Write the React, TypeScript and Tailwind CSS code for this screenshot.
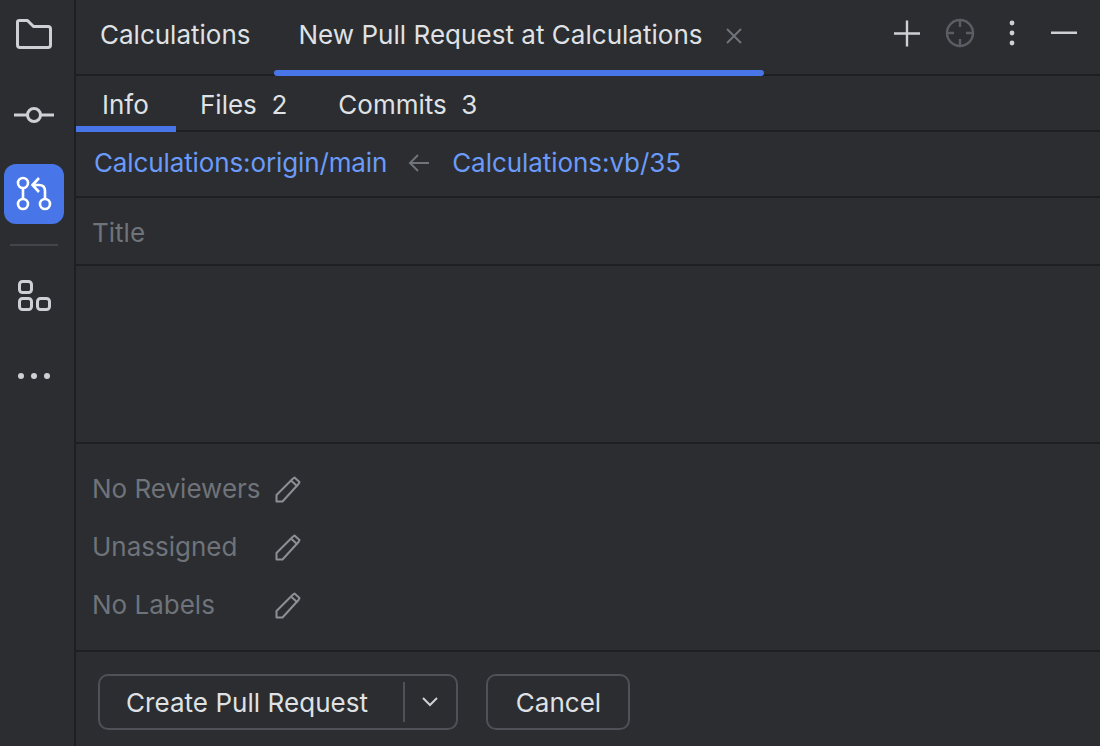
import React from "react";

const Pencil = () => (
  <svg width="28" height="28" viewBox="0 0 28 28" fill="none" stroke="#8c8f96" strokeWidth="2" className="shrink-0">
    <path d="M2.5 26.5V20L18.5 4L20.5 2.5L25.5 7L24.5 9L8.5 26.5Z" strokeLinejoin="round" />
    <path d="M17 5.5L23.5 11.5" />
  </svg>
);

function MetaRow({ label }: { label: string }) {
  return (
    <div className="flex items-center h-[58px]">
      <span className="w-[182px] text-[#6f737a]">{label}</span>
      <Pencil />
    </div>
  );
}

export default function App() {
  return (
    <div
      className="w-[1100px] h-[746px] flex bg-[#2b2d30] text-[26px] leading-[32px] text-[#dfe1e5] overflow-hidden"
      style={{ fontFamily: "Inter, sans-serif" }}
    >
      <aside className="w-[76px] shrink-0 border-r-2 border-[#1e1f22] flex flex-col items-center pt-[14px] pr-[6px]">
        <svg width="40" height="40" viewBox="0 0 40 40" fill="none" stroke="#ced0d6" strokeWidth="3" strokeLinejoin="round">
          <path d="M3.5 8Q3.5 6.5 5.5 6.5H13.5L19.5 12.5H34Q36.5 12.5 36.5 15V31Q36.5 33.5 34 33.5H6Q3.5 33.5 3.5 31Z" />
        </svg>
        <svg width="40" height="40" viewBox="0 0 40 40" fill="none" stroke="#ced0d6" strokeWidth="3" className="mt-[41px]">
          <circle cx="20" cy="20" r="6.5" />
          <path d="M0 20H13M27 20H40" />
        </svg>
        <div className="mt-[29px] w-[60px] h-[60px] rounded-[12px] bg-[#4876e8] flex items-center justify-center">
          <svg width="40" height="40" viewBox="0 0 40 40" fill="none" stroke="#ffffff" strokeWidth="2.6">
            <circle cx="9" cy="9" r="5" />
            <circle cx="9" cy="30" r="5" />
            <circle cx="31" cy="30" r="5" />
            <path d="M9 14V25" />
            <path d="M31 25V17Q31 11 25 11H19M25 4L18.5 11L25 18" />
          </svg>
        </div>
        <div className="mt-[20px] w-[48px] h-[2px] bg-[#43454a]" />
        <svg width="40" height="40" viewBox="0 0 40 40" fill="none" stroke="#ced0d6" strokeWidth="3" className="mt-[30px]">
          <rect x="5.5" y="5.5" width="12" height="11" rx="3" />
          <rect x="5.5" y="22.5" width="12" height="11" rx="3" />
          <rect x="23.5" y="22.5" width="12" height="11" rx="3" />
        </svg>
        <svg width="40" height="12" viewBox="0 0 40 12" fill="#ced0d6" className="mt-[54px]">
          <circle cx="7" cy="6" r="3" />
          <circle cx="20" cy="6" r="3" />
          <circle cx="33" cy="6" r="3" />
        </svg>
      </aside>

      <main className="flex-1 min-w-0 flex flex-col">
        <header className="h-[76px] shrink-0 border-b-2 border-[#1e1f22] flex items-start relative">
          <div className="pl-[24px] pt-[19px]">Calculations</div>
          <div className="ml-[23px] w-[490px] h-[76px] relative pl-[25px] pt-[19px] flex items-start">
            <span className="tracking-[0.03px]">New Pull Request at Calculations</span>
            <svg width="18" height="18" viewBox="0 0 18 18" stroke="#6f737a" strokeWidth="2" className="ml-[22px] mt-[8px]">
              <path d="M2 2L16 16M16 2L2 16" />
            </svg>
            <div className="absolute left-0 right-0 top-[70px] h-[6px] rounded-full bg-[#4876e8]" />
          </div>
          <div className="ml-auto flex items-center pt-[18px]">
            <svg width="28" height="28" viewBox="0 0 28 28" stroke="#ced0d6" strokeWidth="2.4" className="mr-[24px]">
              <path d="M1 14.5H27M14 1.5V27.5" />
            </svg>
            <svg width="30" height="30" viewBox="0 0 30 30" fill="none" stroke="#5a5d63" strokeWidth="2.4" className="mr-[33px]">
              <circle cx="15" cy="15" r="13" />
              <path d="M15 2V9M15 21V28M2 15H9M21 15H28" />
            </svg>
            <svg width="8" height="26" viewBox="0 0 8 26" fill="#ced0d6" className="mr-[35px]">
              <circle cx="4" cy="3" r="2.4" />
              <circle cx="4" cy="13" r="2.4" />
              <circle cx="4" cy="23" r="2.4" />
            </svg>
            <svg width="26" height="4" viewBox="0 0 26 4" fill="#ced0d6" className="mr-[23px]">
              <rect width="26" height="2.5" y="0.5" />
            </svg>
          </div>
        </header>

        <nav className="h-[56px] shrink-0 border-b-2 border-[#1e1f22] flex items-start relative">
          <div className="w-[100px] h-[56px] relative pl-[26px] pt-[13px]">
            Info
            <div className="absolute left-0 right-0 top-[50px] h-[6px] bg-[#4876e8]" />
          </div>
          <div className="ml-[24px] pt-[13px] whitespace-pre">Files  2</div>
          <div className="ml-[51px] pt-[13px] whitespace-pre">Commits  3</div>
        </nav>

        <section className="h-[66px] shrink-0 border-b-2 border-[#1e1f22] flex items-center pl-[18px] pb-[2px] text-[#6b9bfa]">
          <span className="tracking-[-0.12px]">Calculations:origin/main</span>
          <svg width="22" height="20" viewBox="0 0 22 20" fill="none" stroke="#6f737a" strokeWidth="2" className="ml-[21px]">
            <path d="M21 10H2M10 2L2 10L10 18" />
          </svg>
          <span className="ml-[22px] tracking-[-0.06px]">Calculations:vb/35</span>
        </section>

        <section className="h-[68px] shrink-0 border-b-2 border-[#1e1f22] flex items-center pl-[16px] pt-[4px] text-[#6f737a]">
          Title
        </section>

        <section className="h-[178px] shrink-0 border-b-2 border-[#1e1f22]" />

        <section className="h-[208px] shrink-0 border-b-2 border-[#1e1f22] pl-[16px] pt-[16px] flex flex-col">
          <MetaRow label="No Reviewers" />
          <MetaRow label="Unassigned" />
          <MetaRow label="No Labels" />
        </section>

        <footer className="flex-1 flex items-start pl-[22px] pt-[22px]">
          <div className="w-[360px] h-[56px] rounded-[10px] border-2 border-[#4e5157] flex items-center">
            <span className="pl-[26px] pt-[2px] w-[303px] tracking-[0.05px]">Create Pull Request</span>
            <div className="w-[2px] h-[40px] bg-[#4e5157]" />
            <svg width="18" height="12" viewBox="0 0 18 12" fill="none" stroke="#ced0d6" strokeWidth="2" className="ml-[16px]">
              <path d="M2 2L9 9L16 2" />
            </svg>
          </div>
          <div className="ml-[28px] w-[144px] h-[56px] rounded-[10px] border-2 border-[#4e5157] flex items-center justify-center pt-[2px] pl-[1px]">
            Cancel
          </div>
        </footer>
      </main>
    </div>
  );
}
